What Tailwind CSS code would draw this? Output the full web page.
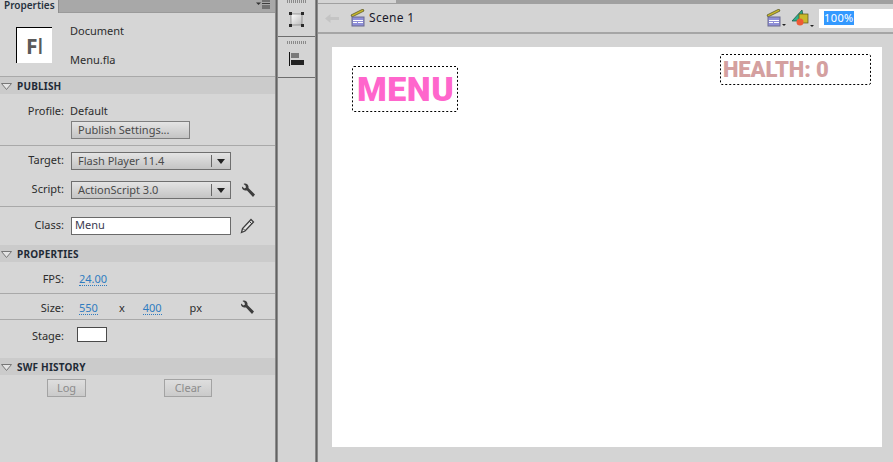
<!DOCTYPE html>
<html lang="en">
<head>
  <meta charset="UTF-8" />
  <title>Menu.fla</title>
  <script src="https://cdn.jsdelivr.net/npm/@tailwindcss/browser@4"></script>
</head>
<body class="w-[893px] h-[462px] overflow-hidden bg-[#d4d4d4] font-['Noto_Sans',sans-serif] text-[11px] leading-[14px] text-[#2c2c2c]">
  <div class="flex h-[462px]">

    <!-- properties panel -->
    <div class="w-[275px] h-full shrink-0 bg-[#d6d6d6]">
      <div class="flex h-[13px] bg-[#a8a8a8] border-b border-[#9a9a9a]">
        <div class="w-[59px] h-[13px] bg-[#d6d6d6] border-r border-[#8f8f8f] pl-1 font-semibold text-[#26323f] text-[10px] leading-[11px]">Properties</div>
        <div class="flex-1 flex justify-end items-start pr-[4px]">
          <svg width="15" height="9" viewBox="0 0 15 9"><path d="M0 2.5h5L2.5 5z" fill="#333"/><path d="M6 1h8M6 3.5h8M6 6h8M6 8h8" stroke="#3d3d3d" stroke-width="1"/></svg>
        </div>
      </div>

      <div class="h-[64px] border-b border-[#a9a9a9] flex">
        <div class="mt-[14px] ml-[16px] w-[36px] h-[36px] bg-white border-l border-t border-black flex items-center justify-center font-bold text-[#5a5a5a] text-[21px]">F<span class="font-medium">l</span></div>
        <div class="ml-[18px] mt-[11px]">
          <div class="h-[14px]">Document</div>
          <div class="h-[14px] mt-[15px]">Menu.fla</div>
        </div>
      </div>

      <div class="h-[17px] bg-[#cbcbcb] flex items-center font-bold text-[10px] text-[#1f2a36] tracking-[.2px]">
        <svg class="ml-[1px] mr-[5px] mt-[2px]" width="11" height="7" viewBox="0 0 11 7"><path d="M.5.5h10L5.5 6.5z" fill="#e4e4e4" stroke="#777"/></svg>
        PUBLISH
      </div>

      <div class="h-[52px] border-b border-[#a9a9a9]">
        <div class="flex h-[27px] items-end pb-[3px]">
          <span class="w-[64px] text-right">Profile:</span>
          <span class="ml-[6px]">Default</span>
        </div>
        <div class="ml-[71px] w-[119px] h-[18px] border border-[#7f7f7f] bg-gradient-to-b from-[#e4e4e4] to-[#c4c4c4] pl-[6px] leading-[15px] text-[#4a4a4a]">Publish Settings...</div>
      </div>

      <div class="h-[61px] border-b border-[#a9a9a9] pt-[6px]">
        <div class="flex items-center h-[18px]">
          <span class="w-[64px] text-right -mt-[2px]">Target:</span>
          <div class="ml-[7px] w-[160px] h-[18px] border border-[#6f6f6f] bg-gradient-to-b from-[#e4e4e4] to-[#c4c4c4] flex items-center pl-[6px] text-[#4a4a4a]">
            <span class="flex-1 -mt-[1px]">Flash Player 11.4</span>
            <span class="w-[1px] h-[12px] bg-[#666]"></span>
            <svg class="mx-[5px]" width="8" height="5" viewBox="0 0 8 5"><path d="M0 0h8L4 5z" fill="#222"/></svg>
          </div>
        </div>
        <div class="flex items-center h-[18px] mt-[11px]">
          <span class="w-[64px] text-right -mt-[2px]">Script:</span>
          <div class="ml-[7px] w-[160px] h-[18px] border border-[#6f6f6f] bg-gradient-to-b from-[#e4e4e4] to-[#c4c4c4] flex items-center pl-[6px] text-[#4a4a4a]">
            <span class="flex-1 -mt-[1px]">ActionScript 3.0</span>
            <span class="w-[1px] h-[12px] bg-[#666]"></span>
            <svg class="mx-[5px]" width="8" height="5" viewBox="0 0 8 5"><path d="M0 0h8L4 5z" fill="#222"/></svg>
          </div>
          <svg class="ml-[10px]" width="15" height="15" viewBox="0 0 15 15"><path d="M1 3.5 3.5 5.5 5 4.5 4.5 2.5 2.5 1C4.5 0 7 1 7.5 3.5L7.5 5 14 11.5 12 14 6 7.5C3.5 8 .5 6.5 1 3.5Z" fill="#3d3d3d"/></svg>
        </div>
      </div>

      <div class="h-[38px] pt-[10px]">
        <div class="flex items-center h-[18px]">
          <span class="w-[64px] text-right -mt-[2px]">Class:</span>
          <div class="ml-[7px] w-[160px] h-[18px] border border-[#6a6a6a] bg-white pl-[3px] leading-[14px] text-[#3a3a50]">Menu</div>
          <svg class="ml-[9px]" width="15" height="16" viewBox="0 0 15 16"><path d="M11 1.5 13.5 4 5 13 1.5 14.5 2.5 10.5Z" fill="#e6e6e6" stroke="#3d3d3d" stroke-width="1.3"/><path d="M9.5 3.5 12 6M3 10.5 5 12.5" stroke="#3d3d3d"/></svg>
        </div>
      </div>

      <div class="h-[17px] bg-[#cbcbcb] flex items-center font-bold text-[10px] text-[#1f2a36] tracking-[.2px]">
        <svg class="ml-[1px] mr-[5px] mt-[2px]" width="11" height="7" viewBox="0 0 11 7"><path d="M.5.5h10L5.5 6.5z" fill="#e4e4e4" stroke="#777"/></svg>
        PROPERTIES
      </div>

      <div class="h-[32px] border-b border-[#a9a9a9] flex pt-[10px]">
        <span class="w-[64px] text-right">FPS:</span>
        <span class="ml-[15px] h-[14px] text-[#2f7cc0] border-b border-dotted border-[#2f7cc0]">24.00</span>
      </div>

      <div class="h-[26px] border-b border-[#a9a9a9] flex pt-[7px]">
        <span class="w-[64px] text-right">Size:</span>
        <span class="ml-[15px] h-[14px] text-[#2f7cc0] border-b border-dotted border-[#2f7cc0]">550</span>
        <span class="ml-[21px]">x</span>
        <span class="ml-[18px] h-[14px] text-[#2f7cc0] border-b border-dotted border-[#2f7cc0]">400</span>
        <span class="ml-[28px]">px</span>
        <svg class="ml-[38px] -mt-[1px]" width="15" height="15" viewBox="0 0 15 15"><path d="M1 3.5 3.5 5.5 5 4.5 4.5 2.5 2.5 1C4.5 0 7 1 7.5 3.5L7.5 5 14 11.5 12 14 6 7.5C3.5 8 .5 6.5 1 3.5Z" fill="#3d3d3d"/></svg>
      </div>

      <div class="h-[38px] flex pt-[7px]">
        <span class="w-[64px] text-right mt-[2px]">Stage:</span>
        <span class="ml-[13px] w-[30px] h-[15px] bg-white border border-[#4a4a4a]"></span>
      </div>

      <div class="h-[17px] bg-[#cbcbcb] flex items-center font-bold text-[10px] text-[#1f2a36] tracking-[.2px]">
        <svg class="ml-[1px] mr-[5px] mt-[2px]" width="11" height="7" viewBox="0 0 11 7"><path d="M.5.5h10L5.5 6.5z" fill="#e4e4e4" stroke="#777"/></svg>
        SWF HISTORY
      </div>

      <div class="flex mt-[4px] text-[#8c8c8c] text-center leading-[15px]">
        <div class="ml-[47px] w-[39px] h-[18px] border border-[#a3a3a3] bg-gradient-to-b from-[#dedede] to-[#cacaca]">Log</div>
        <div class="ml-[78px] w-[48px] h-[18px] border border-[#a3a3a3] bg-gradient-to-b from-[#dedede] to-[#cacaca]">Clear</div>
      </div>
    </div>

    <div class="w-[3px] h-full shrink-0 bg-[#636363] border-x border-[#8a8a8a]"></div>

    <!-- tool strip -->
    <div class="w-[37px] h-full shrink-0 bg-[#d4d4d4]">
      <div class="h-[37px] border-b border-[#6d6d6d] flex flex-col items-center">
        <div class="w-[20px] h-[3px] bg-[repeating-linear-gradient(90deg,#8a8a8a_0,#8a8a8a_1px,transparent_1px,transparent_2px)]"></div>
        <svg class="mt-[9px]" width="15" height="15" viewBox="0 0 15 15"><defs><linearGradient id="tf" x1="0" y1="0" x2="1" y2="1"><stop offset="0" stop-color="#fff"/><stop offset="1" stop-color="#bbb"/></linearGradient></defs><rect x="2" y="2" width="11" height="11" fill="url(#tf)" stroke="#555" stroke-width=".5"/><path d="M0 0h3v3H0zM12 0h3v3h-3zM0 12h3v3H0zM12 12h3v3h-3z" fill="#2a2a2a"/></svg>
      </div>
      <div class="h-[41px] border-b border-[#6d6d6d] flex flex-col items-center">
        <div class="w-[20px] h-[3px] mt-[4px] bg-[repeating-linear-gradient(90deg,#8a8a8a_0,#8a8a8a_1px,transparent_1px,transparent_2px)]"></div>
        <svg class="mt-[8px]" width="15" height="14" viewBox="0 0 15 14"><rect x="0" y="0" width="1" height="14" fill="#111"/><rect x="2" y="1" width="8" height="5" fill="#7a7a7a"/><rect x="2" y="8" width="13" height="5" fill="#222"/></svg>
      </div>
    </div>

    <div class="w-[3px] h-full shrink-0 bg-[#636363] border-x border-[#8a8a8a]"></div>

    <!-- stage area -->
    <div class="flex-1 h-full flex flex-col bg-[#d4d4d4]">
      <div class="flex h-[4px] shrink-0">
        <div class="w-[78px] border-b border-[#a0a0a0]"></div>
        <div class="flex-1 bg-[#a0a0a0]"></div>
      </div>
      <div class="h-[30px] shrink-0 border-b-2 border-[#a5a5a5] flex items-center">
        <svg class="ml-[7px]" width="14" height="11" viewBox="0 0 14 11"><path d="M0 5.5 5.5 1v3H14v3H5.5v3z" fill="#c4c4c4"/></svg>
        <svg class="ml-[11px]" width="15" height="18" viewBox="0 0 15 18"><path d="M1 6 13 0l1 2L2 8z" fill="#c9b92c" stroke="#4d4a20" stroke-width=".7"/><rect x="2" y="8" width="12" height="9" fill="#8f8fd8" stroke="#6a6a90"/><rect x="3" y="11" width="10" height="1" fill="#fff"/><rect x="3" y="13" width="4" height="1" fill="#fff"/><rect x="8" y="13" width="5" height="1" fill="#fff"/></svg>
        <span class="ml-[4px] text-[12px] tracking-[.3px] text-[#1a1a2a]">Scene 1</span>
        <div class="flex-1"></div>
        <svg width="21" height="18" viewBox="0 0 21 18"><path d="M1 6 13 0l1 2L2 8z" fill="#c9b92c" stroke="#4d4a20" stroke-width=".7"/><rect x="2" y="8" width="12" height="9" fill="#8f8fd8" stroke="#6a6a90"/><rect x="3" y="11" width="10" height="1" fill="#fff"/><rect x="3" y="13" width="4" height="1" fill="#fff"/><rect x="8" y="13" width="5" height="1" fill="#fff"/><path d="M16 15h4l-2 2z" fill="#222"/></svg>
        <svg class="ml-[5px]" width="23" height="19" viewBox="0 0 23 19"><path d="M0 12 10 1l2 11z" fill="#2fb08a" stroke="#14503f" stroke-width=".7"/><rect x="7" y="5" width="9" height="9" fill="#c9b92c" stroke="#55501a" stroke-width=".7"/><circle cx="8" cy="13" r="3.5" fill="#ee5a35"/><path d="M18 16h4l-2 2z" fill="#222"/></svg>
        <div class="ml-[4px] w-[74px] h-[19px] bg-white flex items-center pl-[5px]">
          <span class="bg-[#3399ff] text-white tracking-[.4px] leading-[14px]">100%</span>
        </div>
      </div>
      <div class="flex-1 pl-[14px] pt-[13px]">
        <div class="relative w-[550px] h-[400px] bg-white">
          <div class="absolute left-[20px] top-[19px] w-[106px] h-[46px]">
            <svg class="absolute inset-0" width="106" height="46"><rect x=".5" y=".5" width="105" height="45" rx="1.5" fill="none" stroke="#000" stroke-dasharray="2 2"/></svg>
            <div class="pl-[5px] pt-[1px] font-['Roboto',sans-serif] font-black text-[#ff66cc] text-[34px] leading-[44px] tracking-[.5px]">MENU</div>
          </div>
          <div class="absolute left-[388px] top-[7px] w-[151px] h-[31px]">
            <svg class="absolute inset-0" width="151" height="31"><rect x=".5" y=".5" width="150" height="30" rx="1.5" fill="none" stroke="#000" stroke-dasharray="2 2"/></svg>
            <div class="pl-[3px] pt-[1px] font-['Roboto',sans-serif] font-black text-[#d4a0a0] text-[22px] leading-[29px] tracking-[-.1px]">HEALTH: 0</div>
          </div>
        </div>
      </div>
    </div>

  </div>
</body>
</html>
